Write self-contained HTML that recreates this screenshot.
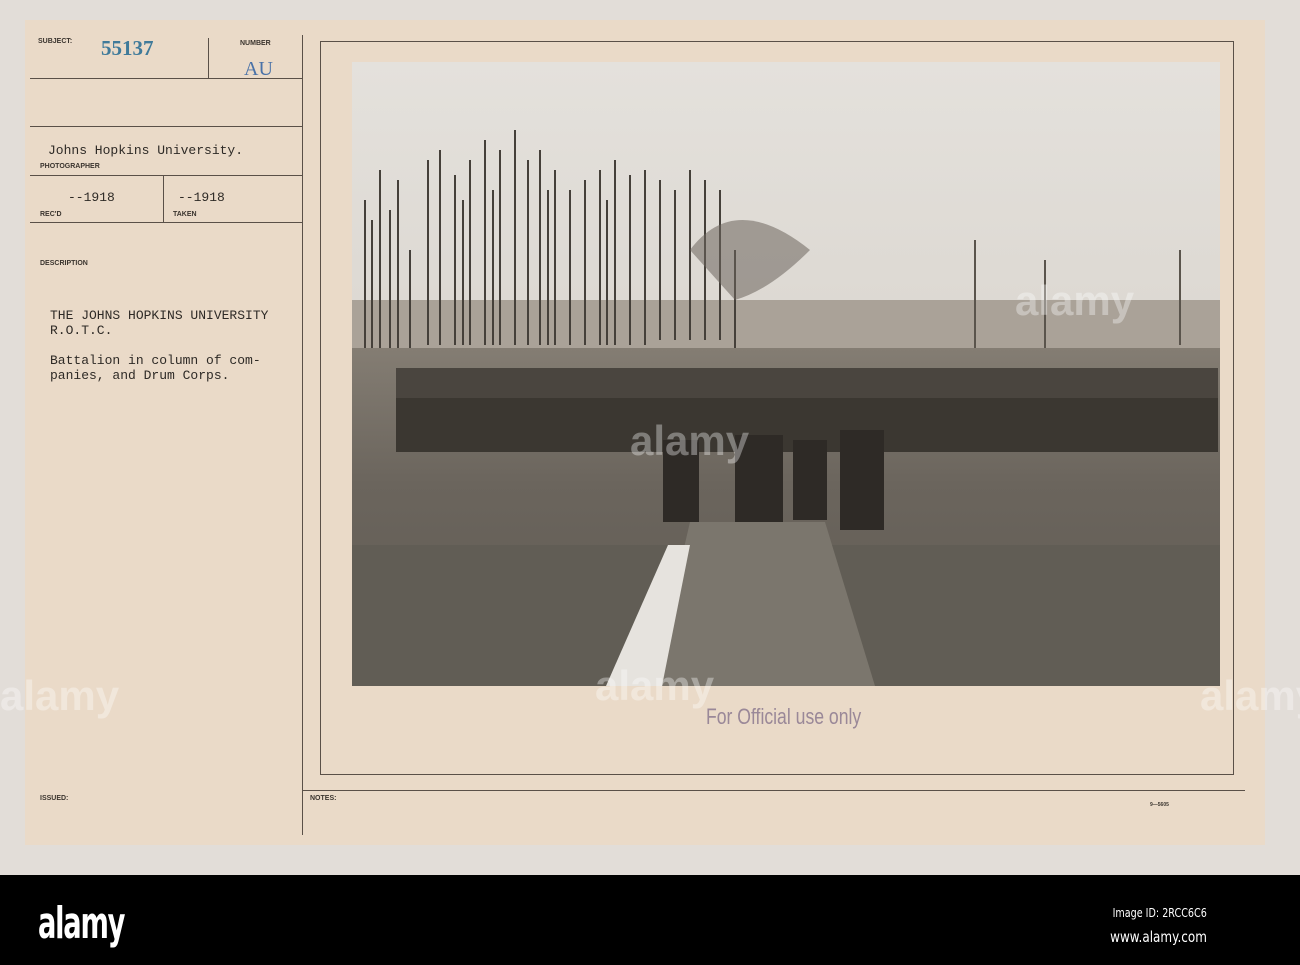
<!DOCTYPE html>
<html><head><meta charset="utf-8"><style>
body{margin:0;width:1300px;height:965px;background:#e2ddd8;position:relative;overflow:hidden;font-family:"Liberation Mono",monospace}
.card{position:absolute;left:25px;top:20px;width:1240px;height:825px;background:#eadac8}
.l{position:absolute;background:#5a5048}
.t{position:absolute;color:#2e2a26;font-size:13px;white-space:pre}
.s{position:absolute;font-family:"Liberation Sans",sans-serif;font-size:7px;font-weight:bold;color:#3a342e}
.bar{position:absolute;left:0;top:875px;width:1300px;height:90px;background:#000}
</style></head><body>
<div class="card"></div>
<div class="l" style="left:302px;top:35px;width:1px;height:800px"></div>
<div class="l" style="left:30px;top:78px;width:272px;height:1px"></div>
<div class="l" style="left:30px;top:126px;width:272px;height:1px"></div>
<div class="l" style="left:30px;top:175px;width:272px;height:1px"></div>
<div class="l" style="left:30px;top:222px;width:272px;height:1px"></div>
<div class="l" style="left:208px;top:38px;width:1px;height:40px"></div>
<div class="l" style="left:163px;top:176px;width:1px;height:46px"></div>
<div style="position:absolute;left:320px;top:41px;width:912px;height:732px;border:1px solid #5a5048"></div>
<div class="l" style="left:303px;top:790px;width:942px;height:1px"></div>
<div class="s" style="left:38px;top:38px">SUBJECT:</div>
<div class="t" style="left:101px;top:36px;font-family:'Liberation Serif',serif;font-size:21px;color:#3f7a9a;font-weight:bold">55137</div>
<div class="s" style="left:240px;top:40px">NUMBER</div>
<div class="t" style="left:244px;top:58px;font-family:'Liberation Serif',serif;font-size:20px;color:#4a72a8">AU</div>
<div class="t" style="left:48px;top:143px">Johns Hopkins University.</div>
<div class="s" style="left:40px;top:163px">PHOTOGRAPHER</div>
<div class="t" style="left:68px;top:190px">--1918</div>
<div class="t" style="left:178px;top:190px">--1918</div>
<div class="s" style="left:40px;top:211px">REC'D</div>
<div class="s" style="left:173px;top:211px">TAKEN</div>
<div class="s" style="left:40px;top:260px">DESCRIPTION</div>
<div class="t" style="left:50px;top:308px">THE JOHNS HOPKINS UNIVERSITY
R.O.T.C.

Battalion in column of com-
panies, and Drum Corps.</div>
<div class="s" style="left:40px;top:795px">ISSUED:</div>
<div class="s" style="left:310px;top:795px">NOTES:</div>
<div class="s" style="left:1150px;top:802px;font-size:5px">9—5605</div>
<div style="position:absolute;left:706px;top:704px;font-family:'Liberation Sans',sans-serif;font-size:22px;color:#9a8898;transform:scaleX(.8);transform-origin:left">For Official use only</div>
<svg style="position:absolute;left:0;top:0" width="1300" height="965">
<defs><linearGradient id="sky" x1="0" y1="0" x2="0" y2="1"><stop offset="0" stop-color="#e4e1dc"/><stop offset="1" stop-color="#d2ccc4"/></linearGradient>
<linearGradient id="gr" x1="0" y1="0" x2="0" y2="1"><stop offset="0" stop-color="#847d73"/><stop offset=".4" stop-color="#6b655d"/><stop offset="1" stop-color="#5f5a53"/></linearGradient></defs>
<rect x="352" y="62" width="868" height="624" fill="url(#sky)"/>
<rect x="352" y="300" width="868" height="50" fill="#aaa298"/>
<g stroke="#45403a" stroke-width="2">
<path d="M365 200V350M372 220V350M380 170V350M390 210V350M398 180V350M410 250V350M428 160V345M440 150V345M455 175V345M463 200V345M470 160V345M485 140V345M493 190V345M500 150V345M515 130V345M528 160V345M540 150V345M548 190V345M555 170V345M570 190V345M585 180V345M600 170V345M607 200V345M615 160V345M630 175V345M645 170V345M660 180V340M675 190V340M690 170V340M705 180V340M720 190V340M735 250V360"/>
</g>
<path d="M690 250Q735 190 810 250Q770 290 735 300Z" fill="#6b645c" opacity=".55"/>
<path d="M975 240V350M1045 260V350M1180 250V345" stroke="#5a544c" stroke-width="2"/>
<rect x="352" y="348" width="868" height="338" fill="url(#gr)"/>
<rect x="352" y="545" width="868" height="141" fill="#615d55"/>
<rect x="396" y="368" width="822" height="30" fill="#4a453f"/>
<rect x="396" y="398" width="822" height="54" fill="#3b3731"/>
<g fill="#2e2a26"><rect x="663" y="440" width="36" height="82"/><rect x="735" y="435" width="48" height="88"/><rect x="793" y="440" width="34" height="80"/><rect x="840" y="430" width="44" height="100"/></g>
<polygon points="690,522 825,522 875,686 652,686" fill="#7b766d"/>
<polygon points="668,545 690,545 662,686 606,686" fill="#e6e3de"/>
<g font-family="Liberation Sans,sans-serif" font-weight="bold" fill="#fff" opacity=".35" font-size="42">
<text x="630" y="455">alamy</text><text x="1015" y="315">alamy</text><text x="595" y="700">alamy</text><text x="0" y="710">alamy</text><text x="1200" y="710">alamy</text></g>
</svg>
<div class="bar"></div>
<div style="position:absolute;left:38px;top:898px;font-family:'DejaVu Sans',sans-serif;font-weight:bold;font-size:44px;color:#fff;transform:scaleX(.62);transform-origin:left;letter-spacing:-2px">alamy</div>
<div style="position:absolute;right:93px;top:906px;font-family:'DejaVu Sans',sans-serif;font-size:12px;color:#fff;transform:scaleX(.8);transform-origin:right">Image ID: 2RCC6C6</div>
<div style="position:absolute;right:93px;top:928px;font-family:'DejaVu Sans',sans-serif;font-size:15px;color:#fff;transform:scaleX(.8);transform-origin:right">www.alamy.com</div>
</body></html>
